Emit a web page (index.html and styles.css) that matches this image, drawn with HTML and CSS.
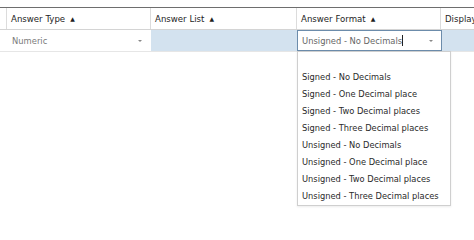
FILE: index.html
```html
<!DOCTYPE html>
<html>
<head>
<meta charset="utf-8">
<link rel="stylesheet" href="styles.css">
</head>
<body>
<div class="grid">
  <div class="row head">
    <div class="cell c0"></div>
    <div class="cell c1">Answer Type <span class="sort">▲</span></div>
    <div class="cell c2">Answer List <span class="sort">▲</span></div>
    <div class="cell c3">Answer Format <span class="sort">▲</span></div>
    <div class="cell c4">Display</div>
  </div>
  <div class="row data">
    <div class="cell c0"></div>
    <div class="cell c1 plain"><span class="val">Numeric</span><span class="caret"></span></div>
    <div class="cell c2 sel"></div>
    <div class="cell c3 sel">
      <div class="select"><span class="val dark">Unsigned - No Decimals</span><span class="cursor"></span><span class="caret"></span></div>
      <ul class="menu">
        <li class="empty"></li>
        <li>Signed - No Decimals</li>
        <li>Signed - One Decimal place</li>
        <li>Signed - Two Decimal places</li>
        <li>Signed - Three Decimal places</li>
        <li>Unsigned - No Decimals</li>
        <li>Unsigned - One Decimal place</li>
        <li>Unsigned - Two Decimal places</li>
        <li>Unsigned - Three Decimal places</li>
      </ul>
    </div>
    <div class="cell c4 sel"></div>
  </div>
</div>
</body>
</html>
```
FILE: styles.css
```css
html, body {
  margin: 0;
  padding: 0;
  background: #fff;
  width: 474px;
  height: 227px;
  overflow: hidden;
  font-family: "DejaVu Sans", Verdana, sans-serif;
}
.grid {
  margin-top: 7px;
  width: 474px;
}
.row {
  display: flex;
}
.head {
  border-top: 1px solid #6e6e6e;
  border-bottom: 1px solid #d4d4d4;
  height: 21px;
}
.data {
  border-bottom: 1px solid #e6e6e6;
  height: 21px;
}
.cell {
  box-sizing: border-box;
  border-right: 1px solid #dcdcdc;
  position: relative;
  display: flex;
  align-items: center;
  flex-shrink: 0;
}
.head .cell {
  font-size: 8.6px;
  color: #1e1e1e;
  padding-left: 4px;
  padding-top: 1px;
  white-space: nowrap;
}
.data .cell { border-right-color: transparent; }
.c0 { width: 7px; }
.data .c0 { border-right: none; width: 7px; }
.c1 { width: 144px; }
.c2 { width: 146px; }
.c3 { width: 144px; }
.c4 { width: 33px; border-right: none; overflow: hidden; }
.sort {
  font-size: 6px;
  margin-left: 5px;
  position: relative;
  top: -1px;
}
.plain {
  padding-left: 5px;
}
.val {
  font-size: 8.4px;
  color: #7a7a7a;
}
.val.dark { color: #666; }
.caret {
  position: absolute;
  right: 8px;
  top: 10px;
  width: 0;
  height: 0;
  border-left: 2.5px solid transparent;
  border-right: 2.5px solid transparent;
  border-top: 2.5px solid #888;
}
.sel {
  background: #d3e2ef;
}
.data .c4 { border-left: 1px solid #c9d6e2; }
.select {
  box-sizing: border-box;
  position: absolute;
  left: 0;
  top: 0;
  width: 145px;
  height: 21px;
  background: #fff;
  border: 1px solid #6c8cab;
  display: flex;
  align-items: center;
  padding-left: 4px;
  z-index: 2;
}
.select .caret { top: 9px; }
.cursor {
  display: inline-block;
  width: 1px;
  height: 11px;
  background: #222;
}
.menu {
  position: absolute;
  left: 0;
  top: 21px;
  width: 154px;
  box-sizing: border-box;
  margin: 0;
  padding: 0;
  list-style: none;
  background: #fff;
  border: 1px solid #cfcfcf;
  box-shadow: 0 1px 2px rgba(0,0,0,0.08);
  z-index: 3;
}
.menu li {
  height: 17px;
  line-height: 17px;
  padding-left: 4px;
  font-size: 8.3px;
  color: #2a2a2a;
  white-space: nowrap;
}
```
